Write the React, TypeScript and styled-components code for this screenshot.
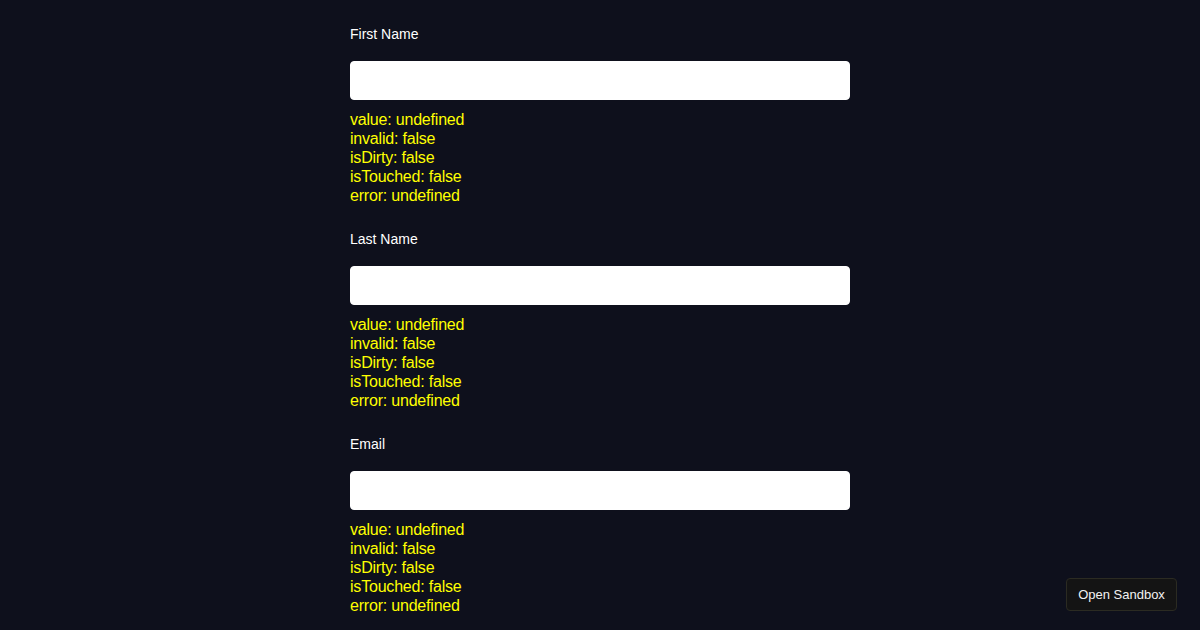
import React from 'react';
import styled, { createGlobalStyle } from 'styled-components';

const GlobalStyle = createGlobalStyle`
  html, body {
    margin: 0;
    padding: 0;
    background: #0e101c;
    font-family: 'Liberation Sans', Arial, sans-serif;
  }
`;

const Page = styled.div`
  min-height: 100vh;
  background: #0e101c;
`;

const Form = styled.form`
  max-width: 500px;
  margin: 0 auto;
`;

const Label = styled.label`
  display: block;
  line-height: 2;
  margin-top: 20px;
  margin-bottom: 13px;
  color: white;
  font-size: 14px;
  font-weight: 200;
`;

const Input = styled.input`
  display: block;
  box-sizing: border-box;
  width: 100%;
  height: 39px;
  border-radius: 4px;
  border: 1px solid white;
  background: white;
  padding: 10px 15px;
  margin: 0 0 10px;
  font-size: 14px;
  font-family: inherit;
`;

const State = styled.div`
  color: #ffff00;
  font-size: 16px;
  line-height: 19px;
  letter-spacing: -0.2px;
`;

const SandboxButton = styled.button`
  position: fixed;
  right: 23px;
  bottom: 19px;
  width: 111px;
  height: 33px;
  box-sizing: border-box;
  background: #141414;
  border: 1px solid #2b2b22;
  border-radius: 4px;
  color: #f2f2f2;
  font-family: 'Liberation Sans', Arial, sans-serif;
  font-size: 13px;
  padding: 0;
  cursor: pointer;
`;

const fields = ['First Name', 'Last Name', 'Email'];

function Field({ label }: { label: string }) {
  return (
    <>
      <Label>{label}</Label>
      <Input />
      <State>
        <div>value: undefined</div>
        <div>invalid: false</div>
        <div>isDirty: false</div>
        <div>isTouched: false</div>
        <div>error: undefined</div>
      </State>
    </>
  );
}

export default function App() {
  return (
    <Page>
      <GlobalStyle />
      <Form onSubmit={(e) => e.preventDefault()}>
        {fields.map((f) => (
          <Field key={f} label={f} />
        ))}
      </Form>
      <SandboxButton type="button">Open Sandbox</SandboxButton>
    </Page>
  );
}
